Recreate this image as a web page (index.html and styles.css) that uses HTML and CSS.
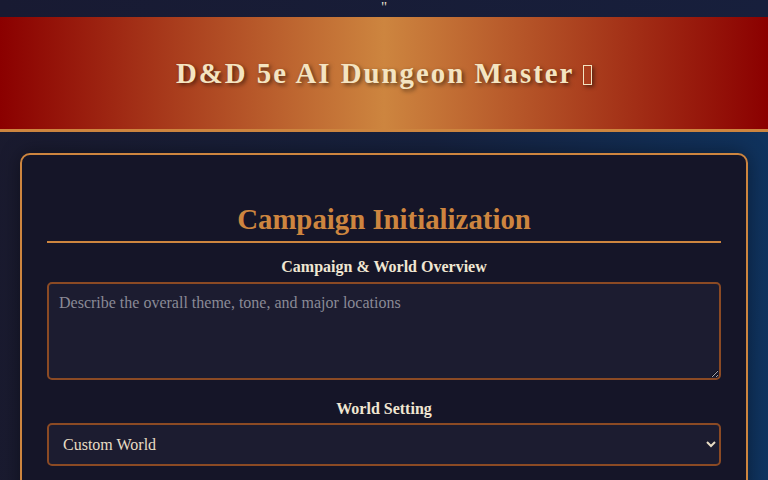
FILE: index.html
```html
<!DOCTYPE html>
<html lang="en">
<head>
<meta charset="UTF-8">
<meta name="viewport" content="width=device-width, initial-scale=1.0">
<title>D&amp;D 5e AI Dungeon Master</title>
<link rel="stylesheet" href="styles.css">
</head>
<body>

<div class="topbar">"</div>

<header class="header">
  <h1>D&amp;D 5e AI Dungeon Master <span class="glyph-box"></span></h1>
</header>

<div class="main">
  <div class="card">
    <h2>Campaign Initialization</h2>

    <div class="field">
      <label for="overview">Campaign &amp; World Overview</label>
      <textarea id="overview" placeholder="Describe the overall theme, tone, and major locations"></textarea>
    </div>

    <div class="field">
      <label for="setting">World Setting</label>
      <select id="setting">
        <option>Custom World</option>
        <option>Forgotten Realms</option>
        <option>Eberron</option>
        <option>Ravenloft</option>
      </select>
    </div>
  </div>
</div>

</body>
</html>
```

FILE: styles.css
```css
html, body {
  margin: 0;
  padding: 0;
}
body {
  font-family: "Liberation Serif", "Times New Roman", serif;
  color: #f0e6d2;
  background: linear-gradient(95deg, #1a1a2e 0%, #16213e 55%, #0f3460 100%);
  background-attachment: fixed;
  min-height: 480px;
}
.topbar {
  height: 17px;
  line-height: 14px;
  text-align: center;
  font-size: 15px;
  color: #e8e0d0;
  background: linear-gradient(90deg, #181a32 0%, #171f3c 100%);
}
.header {
  background: linear-gradient(90deg, #8b0000 0%, #cd853f 50%, #8b0000 100%);
  border-bottom: 3px solid #cd853f;
  height: 112px;
  display: flex;
  align-items: center;
  justify-content: center;
}
.header h1 {
  margin: 0;
  font-size: 28.8px;
  font-weight: bold;
  letter-spacing: 2px;
  color: #f4e4c1;
  text-shadow: 2px 2px 4px rgba(0, 0, 0, 0.55);
}
/* empty box where the dragon glyph would go */
.glyph-box {
  display: inline-block;
  width: 7px;
  height: 18px;
  border: 1.5px solid #f4e4c1;
  vertical-align: -2px;
  box-shadow: 2px 2px 4px rgba(0, 0, 0, 0.45);
}
.main {
  padding: 21px 20px 20px;
}
.card {
  background-color: #151528;
  border: 2px solid #cd853f;
  border-radius: 10px;
  padding: 25px;
  box-shadow: 0 0 20px rgba(0, 0, 0, 0.4);
}
.card h2 {
  margin: 23px 0 15px;
  padding-bottom: 6px;
  border-bottom: 2px solid #cd853f;
  text-align: center;
  font-size: 28.8px;
  line-height: 32px;
  color: #cd853f;
}
.field {
  margin-bottom: 20px;
}
.field label {
  display: block;
  text-align: center;
  font-weight: bold;
  font-size: 16px;
  line-height: 18px;
  margin-bottom: 6px;
}
.field:nth-child(3) label {
  margin-bottom: 5px;
}
textarea, select {
  display: block;
  width: 100%;
  box-sizing: border-box;
  font-family: "Liberation Serif", "Times New Roman", serif;
  font-size: 16px;
  color: #e8dcc4;
  background-color: #1c1c30;
  border: 2px solid #8b4a24;
  border-radius: 5px;
  color-scheme: dark;
}
textarea {
  height: 98px;
  padding: 10px;
  resize: vertical;
}
textarea::placeholder {
  color: #8a8a96;
}
select {
  height: 43px;
  padding: 0 10px;
}
```
